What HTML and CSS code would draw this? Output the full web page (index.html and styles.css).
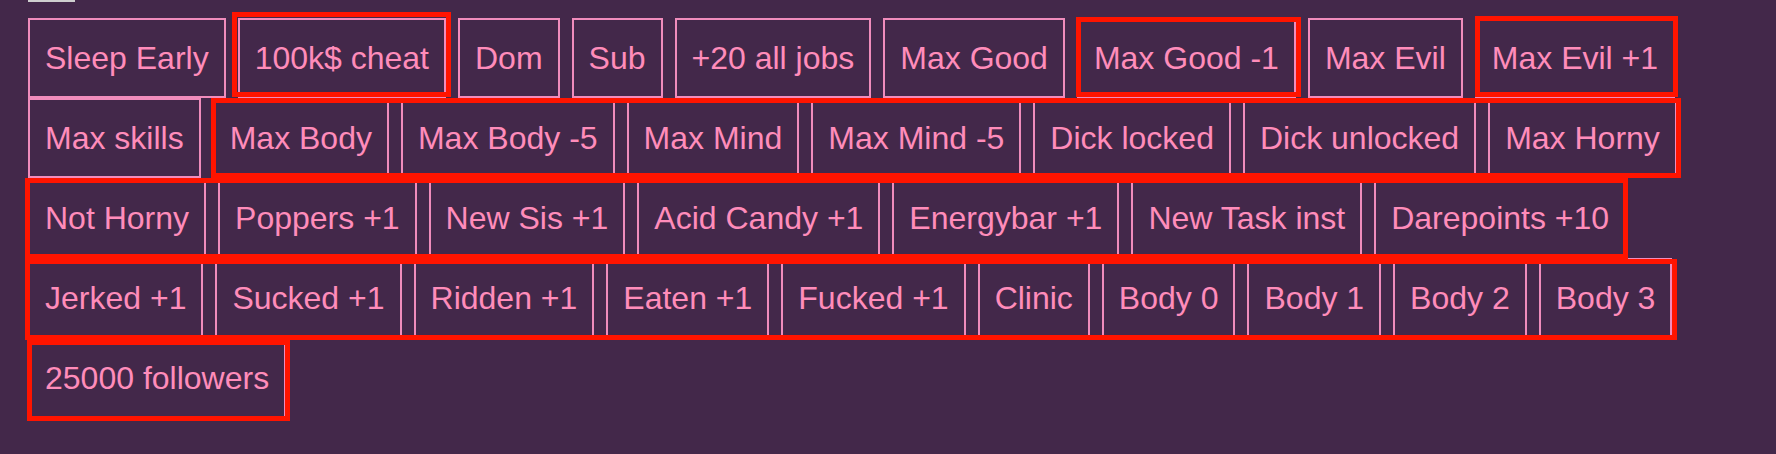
FILE: index.html
```html
<!DOCTYPE html>
<html>
<head>
<meta charset="utf-8">
<link rel="stylesheet" href="styles.css">
</head>
<body>
<div class="page">
  <div class="stub"></div>
  <div class="cheats">
    <button class="btn">Sleep Early</button>
    <button class="btn">100k$ cheat</button>
    <button class="btn">Dom</button>
    <button class="btn">Sub</button>
    <button class="btn">+20 all jobs</button>
    <button class="btn">Max Good</button>
    <button class="btn">Max Good -1</button>
    <button class="btn">Max Evil</button>
    <button class="btn">Max Evil +1</button>
    <button class="btn">Max skills</button>
    <button class="btn">Max Body</button>
    <button class="btn">Max Body -5</button>
    <button class="btn">Max Mind</button>
    <button class="btn">Max Mind -5</button>
    <button class="btn">Dick locked</button>
    <button class="btn">Dick unlocked</button>
    <button class="btn">Max Horny</button>
    <button class="btn">Not Horny</button>
    <button class="btn">Poppers +1</button>
    <button class="btn">New Sis +1</button>
    <button class="btn">Acid Candy +1</button>
    <button class="btn">Energybar +1</button>
    <button class="btn">New Task inst</button>
    <button class="btn">Darepoints +10</button>
    <button class="btn">Jerked +1</button>
    <button class="btn">Sucked +1</button>
    <button class="btn">Ridden +1</button>
    <button class="btn">Eaten +1</button>
    <button class="btn">Fucked +1</button>
    <button class="btn">Clinic</button>
    <button class="btn">Body 0</button>
    <button class="btn">Body 1</button>
    <button class="btn">Body 2</button>
    <button class="btn">Body 3</button>
    <button class="btn">25000 followers</button>
  </div>
  <div class="mark" style="left:232px;top:12px;width:219px;height:85px"></div>
  <div class="mark" style="left:1076px;top:17px;width:225px;height:80px"></div>
  <div class="mark" style="left:1475px;top:16px;width:203px;height:81px"></div>
  <div class="mark" style="left:211px;top:98px;width:1470px;height:80px"></div>
  <div class="mark" style="left:25px;top:178px;width:1603px;height:81px"></div>
  <div class="mark" style="left:25px;top:259px;width:1652px;height:81px"></div>
  <div class="mark" style="left:27px;top:340px;width:263px;height:81px"></div>
</div>
</body>
</html>
```
FILE: styles.css
```css
html, body {
  margin: 0;
  padding: 0;
  background: #43284a;
}

.page {
  position: relative;
  width: 1776px;
  height: 454px;
  padding-left: 28px;
  box-sizing: border-box;
}

.stub {
  width: 47px;
  height: 2px;
  background: #cfcfcf;
  margin-bottom: 16px;
}

.cheats {
  display: flex;
  flex-wrap: wrap;
  column-gap: 12px;
  row-gap: 0;
  width: 1740px;
}

.btn {
  font-family: "Liberation Sans", Arial, sans-serif;
  font-size: 32px;
  line-height: 37px;
  color: #ff8cba;
  background: transparent;
  border: 2px solid #f08cbc;
  padding: 20px 15px 19px;
  margin: 0;
  border-radius: 0;
  white-space: nowrap;
  cursor: pointer;
}

.mark {
  position: absolute;
  border: 5px solid #ff1400;
  box-sizing: border-box;
  pointer-events: none;
}
```
